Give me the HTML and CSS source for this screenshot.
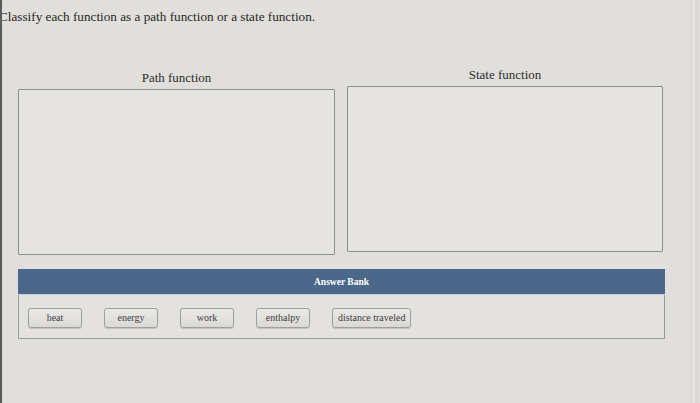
FILE: index.html
```html
<!DOCTYPE html>
<html lang="en">
<head>
<meta charset="utf-8">
<title>Classify functions</title>
<link rel="stylesheet" href="styles.css">
</head>
<body>
<div class="page">
  <p class="title">Classify each function as a path function or a state function.</p>

  <div class="columns">
    <section class="column">
      <h2 class="column-heading">Path function</h2>
      <div class="drop-zone"></div>
    </section>
    <section class="column column-right">
      <h2 class="column-heading">State function</h2>
      <div class="drop-zone"></div>
    </section>
  </div>

  <section class="bank">
    <header class="bank-header">Answer Bank</header>
    <div class="bank-body">
      <span class="chip">heat</span>
      <span class="chip">energy</span>
      <span class="chip">work</span>
      <span class="chip">enthalpy</span>
      <span class="chip">distance traveled</span>
    </div>
  </section>
</div>
</body>
</html>
```
FILE: styles.css
```css
html, body {
  margin: 0;
  padding: 0;
}

body {
  background: #e0dfdb;
  font-family: "Liberation Serif", "Times New Roman", serif;
  color: #2f2f2f;
  overflow: hidden;
}

.page {
  box-sizing: border-box;
  width: 692px;
  height: 403px;
  border-left: 2px solid #5b5b5b;
  border-right: 1px solid #d2d1cd;
  box-shadow: 3px 0 0 #e6e5e2, 6px 0 0 #d9d8d4;
  overflow: hidden;
}

.title {
  margin: 0 0 0 -3px;
  padding-top: 9px;
  font-size: 13.2px;
  line-height: 16px;
  color: #262626;
}

.columns {
  display: flex;
  gap: 12px;
  margin: 45px 0 0 16px;
}

.column {
  width: 317px;
}

.column-right {
  width: 316px;
  margin-top: -3px;
}

.column-heading {
  margin: 0 0 3px;
  font-size: 13px;
  font-weight: normal;
  line-height: 16px;
  text-align: center;
  color: #2e2e2e;
}

.drop-zone {
  box-sizing: border-box;
  height: 166px;
  border: 1px solid #8e8e8c;
  border-radius: 1px;
  background: #e5e4e1;
}

.bank {
  width: 647px;
  margin: 14px 0 0 16px;
}

.bank-header {
  height: 26px;
  line-height: 26px;
  background: #4b6789;
  color: #fff;
  font-size: 9.5px;
  font-weight: bold;
  text-align: center;
  border-bottom: 1px solid #c9d2dc;
  box-sizing: border-box;
}

.bank-body {
  box-sizing: border-box;
  height: 44px;
  display: flex;
  align-items: flex-start;
  gap: 22px;
  padding: 13px 0 0 9px;
  border: 1px solid #9a9a98;
  border-top: none;
  background: #e3e2df;
}

.chip {
  box-sizing: border-box;
  min-width: 54px;
  height: 20px;
  padding: 0 5px;
  line-height: 18px;
  font-size: 10px;
  color: #3e3e3e;
  text-align: center;
  border: 1px solid #a0a09e;
  border-radius: 3px;
  background: linear-gradient(#eae9e6, #dad9d6);
  box-shadow: 0 1px 1px rgba(0, 0, 0, 0.14);
}
```
